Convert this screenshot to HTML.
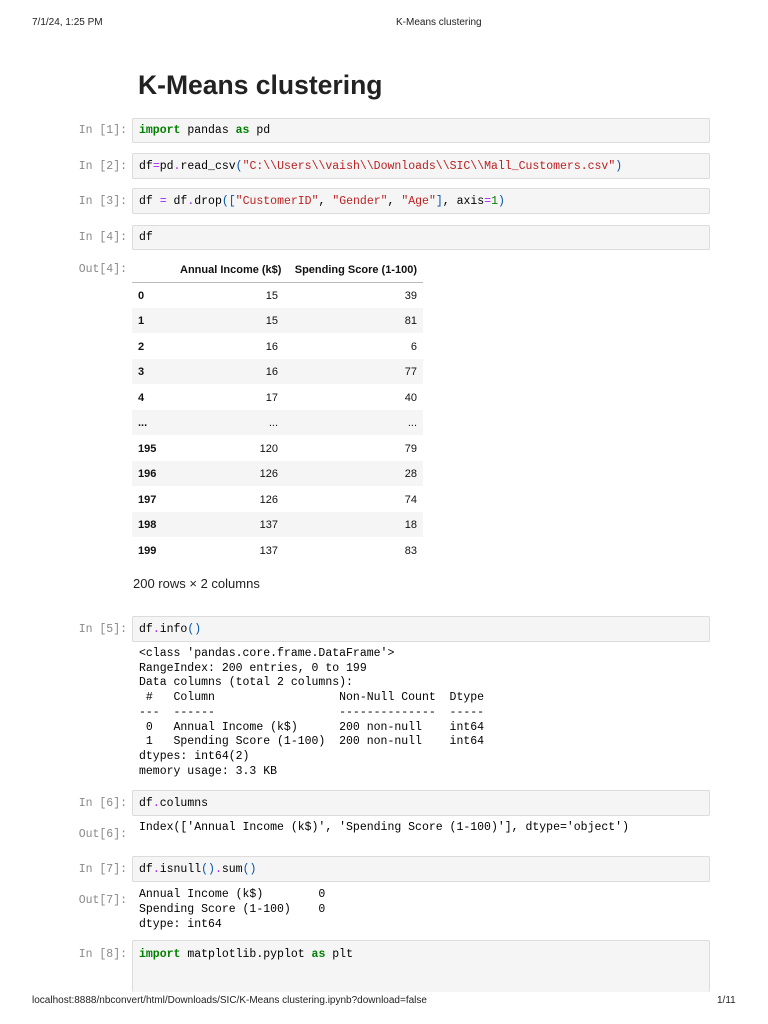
<!DOCTYPE html>
<html><head><meta charset="utf-8"><style>
*{margin:0;padding:0;box-sizing:border-box}
body{width:768px;height:1024px;background:#fff;position:relative;overflow:hidden;font-family:"Liberation Sans",sans-serif;color:#000}
.a{position:absolute;white-space:pre}
.hd{font-size:10px;color:#222}
.p{font-family:"Liberation Mono",monospace;font-size:11.5px;color:#888;right:641px;text-align:right}
.box{position:absolute;left:132px;width:578px;background:#f5f5f5;border:1px solid #dcdcdc;border-radius:2px}
.c{font-family:"Liberation Mono",monospace;font-size:11.5px;color:#000;left:139px}
.k{color:#008000;font-weight:bold}.s{color:#ba2121}.o{color:#aa22ff}.n{color:#008000}.b{color:#0055aa}
table{position:absolute;left:132px;top:257px;border-collapse:collapse;font-size:11px;font-family:"Liberation Sans",sans-serif;color:#111;table-layout:fixed;width:291px}
td,th{height:25.5px;padding:2px 6px 0;text-align:right;white-space:nowrap}
th{font-weight:bold}
thead th{border-bottom:1px solid #bbb;height:25px}
tbody th{text-align:left}
tbody tr:nth-child(even){background:#f5f5f5}
</style></head><body>
<div class="a hd" style="left:32px;top:17px">7/1/24, 1:25 PM</div>
<div class="a hd" style="left:396px;top:17px">K-Means clustering</div>
<div class="a" style="left:138px;top:70px;font-size:26.5px;font-weight:bold;color:#222">K-Means clustering</div>

<div class="a p" style="top:124px">In [1]:</div>
<div class="box" style="top:118px;height:25px"></div>
<div class="a c" style="top:124px"><span class="k">import</span> pandas <span class="k">as</span> pd</div>

<div class="a p" style="top:160px">In [2]:</div>
<div class="box" style="top:153px;height:26px"></div>
<div class="a c" style="top:160px">df<span class="o">=</span>pd<span class="o">.</span>read_csv<span class="b">(</span><span class="s">"C:\\Users\\vaish\\Downloads\\SIC\\Mall_Customers.csv"</span><span class="b">)</span></div>

<div class="a p" style="top:195px">In [3]:</div>
<div class="box" style="top:188px;height:26px"></div>
<div class="a c" style="top:195px">df <span class="o">=</span> df<span class="o">.</span>drop<span class="b">([</span><span class="s">"CustomerID"</span>, <span class="s">"Gender"</span>, <span class="s">"Age"</span><span class="b">]</span>, axis<span class="o">=</span><span class="n">1</span><span class="b">)</span></div>

<div class="a p" style="top:231px">In [4]:</div>
<div class="box" style="top:225px;height:25px"></div>
<div class="a c" style="top:231px">df</div>

<div class="a p" style="top:263px">Out[4]:</div>
<table>
<colgroup><col style="width:42px"><col style="width:110px"><col style="width:139px"></colgroup>
<thead><tr><th></th><th>Annual Income (k$)</th><th>Spending Score (1-100)</th></tr></thead>
<tbody>
<tr><th>0</th><td>15</td><td>39</td></tr>
<tr><th>1</th><td>15</td><td>81</td></tr>
<tr><th>2</th><td>16</td><td>6</td></tr>
<tr><th>3</th><td>16</td><td>77</td></tr>
<tr><th>4</th><td>17</td><td>40</td></tr>
<tr><th>...</th><td>...</td><td>...</td></tr>
<tr><th>195</th><td>120</td><td>79</td></tr>
<tr><th>196</th><td>126</td><td>28</td></tr>
<tr><th>197</th><td>126</td><td>74</td></tr>
<tr><th>198</th><td>137</td><td>18</td></tr>
<tr><th>199</th><td>137</td><td>83</td></tr>
</tbody></table>
<div class="a" style="left:133px;top:576px;font-size:13px;color:#222">200 rows × 2 columns</div>

<div class="a p" style="top:623px">In [5]:</div>
<div class="box" style="top:616px;height:26px"></div>
<div class="a c" style="top:623px">df<span class="o">.</span>info<span class="b">()</span></div>
<div class="a c" style="top:647px;line-height:14.7px">&lt;class 'pandas.core.frame.DataFrame'&gt;
RangeIndex: 200 entries, 0 to 199
Data columns (total 2 columns):
 #   Column                  Non-Null Count  Dtype
---  ------                  --------------  -----
 0   Annual Income (k$)      200 non-null    int64
 1   Spending Score (1-100)  200 non-null    int64
dtypes: int64(2)
memory usage: 3.3 KB</div>

<div class="a p" style="top:797px">In [6]:</div>
<div class="box" style="top:790px;height:26px"></div>
<div class="a c" style="top:797px">df<span class="o">.</span>columns</div>
<div class="a p" style="top:828px">Out[6]:</div>
<div class="a c" style="top:821px">Index(['Annual Income (k$)', 'Spending Score (1-100)'], dtype='object')</div>

<div class="a p" style="top:863px">In [7]:</div>
<div class="box" style="top:856px;height:26px"></div>
<div class="a c" style="top:863px">df<span class="o">.</span>isnull<span class="b">()</span><span class="o">.</span>sum<span class="b">()</span></div>
<div class="a p" style="top:894px">Out[7]:</div>
<div class="a c" style="top:887px;line-height:15px">Annual Income (k$)        0
Spending Score (1-100)    0
dtype: int64</div>

<div class="a p" style="top:948px">In [8]:</div>
<div class="box" style="top:940px;height:52px;border-bottom:none"></div>
<div class="a c" style="top:948px"><span class="k">import</span> matplotlib.pyplot <span class="k">as</span> plt</div>

<div class="a hd" style="left:32px;top:995px">localhost:8888/nbconvert/html/Downloads/SIC/K-Means clustering.ipynb?download=false</div>
<div class="a hd" style="left:717px;top:995px">1/11</div>
</body></html>
